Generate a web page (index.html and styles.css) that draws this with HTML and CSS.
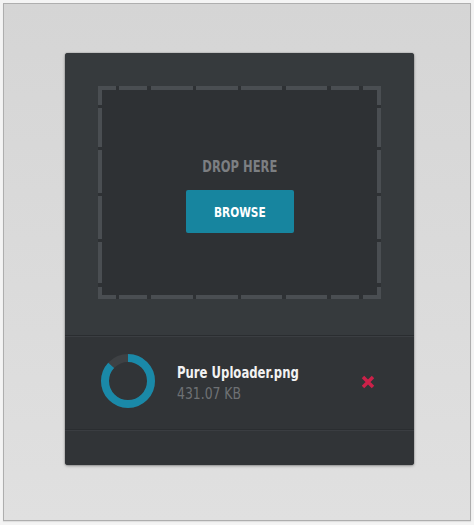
FILE: index.html
```html
<!DOCTYPE html>
<html lang="en">
<head>
<meta charset="utf-8">
<title>Pure Uploader</title>
<link rel="stylesheet" href="styles.css">
</head>
<body>
<div class="frame">
  <div class="uploader">
    <div class="drop-section">
      <div class="dropzone">
        <svg class="dash" width="283" height="213" viewBox="0 0 283 213" aria-hidden="true">
          <path d="M0 2H283M0 211H283" stroke-dasharray="18 3 28 4 42 3 42 3 41 4 41 4 28 4 18 0"/>
          <path d="M2 0V213M281 0V213" stroke-dasharray="19 3 39 3 43 3 43 3 41 4 12 0"/>
        </svg>
        <div class="drop-label"><span class="narrow">DROP HERE</span></div>
        <button class="browse" type="button"><span class="narrow">BROWSE</span></button>
      </div>
    </div>
    <div class="file-row">
      <svg class="ring" width="56" height="56" viewBox="0 0 56 56" aria-hidden="true">
        <circle class="ring-track" cx="28" cy="28" r="23"/>
        <circle class="ring-fill" cx="28" cy="28" r="23" stroke-dasharray="124.8 144.5" transform="rotate(-90 28 28)"/>
      </svg>
      <div class="file-info">
        <div class="file-name"><span class="narrow">Pure Uploader.png</span></div>
        <div class="file-size"><span class="narrow">431.07 KB</span></div>
      </div>
      <button class="remove" type="button" aria-label="Remove">
        <svg width="14" height="14" viewBox="0 0 14 14" aria-hidden="true">
          <path d="M2 2L12 12M12 2L2 12"/>
        </svg>
      </button>
    </div>
    <div class="footer"></div>
  </div>
</div>
</body>
</html>
```

FILE: styles.css
```css
* { box-sizing: border-box; }

html, body {
  margin: 0;
  background: #f4f4f4;
}

body {
  padding: 3px;
  font-family: "DejaVu Sans Condensed", "Liberation Sans", sans-serif;
}

/* condensed look for all labels */
.narrow {
  display: inline-block;
  transform: scaleX(0.8);
  transform-origin: center;
}

.frame {
  width: 468px;
  height: 518px;
  border: 1px solid #aeaeae;
  background: linear-gradient(#d5d5d5, #e0e0e0);
  padding: 49px 56px 0 61px;
  box-shadow: 0 1px 1px rgba(0, 0, 0, 0.08);
}

.uploader {
  width: 349px;
  height: 412px;
  background: #35383b;
  border-radius: 3px;
  box-shadow: 0 1px 3px rgba(0, 0, 0, 0.35), 0 0 0 1px rgba(0, 0, 0, 0.06);
  display: flex;
  flex-direction: column;
  overflow: hidden;
}

.drop-section {
  padding: 33px 33px 36px;
  background: #363a3d;
}

.dropzone {
  position: relative;
  height: 213px;
  background: #2e3134;
  display: flex;
  flex-direction: column;
  align-items: center;
  padding-top: 71px;
}

.dash {
  position: absolute;
  inset: 0;
  fill: none;
  stroke: #4a4e52;
  stroke-width: 4;
}

.drop-label {
  position: relative;
  color: #7c7f82;
  font-weight: bold;
  font-size: 16px;
  line-height: 20px;
}

.browse {
  position: relative;
  margin-top: 13px;
  width: 108px;
  height: 43px;
  border: none;
  border-radius: 2px;
  background: #17859f;
  color: #ffffff;
  font-family: inherit;
  font-weight: bold;
  font-size: 14px;
  padding: 0;
}

.browse .narrow { transform: scaleX(0.84); }

.file-row {
  flex: 0 0 95px;
  display: flex;
  align-items: center;
  background: #313437;
  border-top: 1px solid #2a2d30;
  box-shadow: inset 0 1px 0 #3b3e42;
  border-bottom: 1px solid #2a2d30;
  padding-left: 35px;
}

.ring {
  flex: none;
  margin-top: -4px;
}

.ring-track,
.ring-fill {
  fill: none;
  stroke-width: 8;
}

.ring-track { stroke: #3e4144; }
.ring-fill { stroke: #1a89a8; }

.file-info {
  margin-left: 21px;
  display: flex;
  flex-direction: column;
  gap: 2px;
  width: 184px;
}

.file-info .narrow { transform-origin: left center; }

.file-name {
  color: #f2f2f2;
  font-weight: bold;
  font-size: 16px;
  line-height: 20px;
}

.file-name .narrow { transform: scaleX(0.81); }

.file-size {
  color: #6e7174;
  font-size: 15px;
  line-height: 18px;
}

.file-size .narrow { transform: scaleX(0.92); }

.remove {
  background: none;
  border: none;
  padding: 0;
  width: 14px;
  height: 14px;
  margin-top: -2px;
}

.remove svg {
  display: block;
  fill: none;
  stroke: #cc2149;
  stroke-width: 3.5;
}

.footer {
  flex: 1;
  background: #313437;
  box-shadow: inset 0 1px 0 #3a3d41;
}
```
